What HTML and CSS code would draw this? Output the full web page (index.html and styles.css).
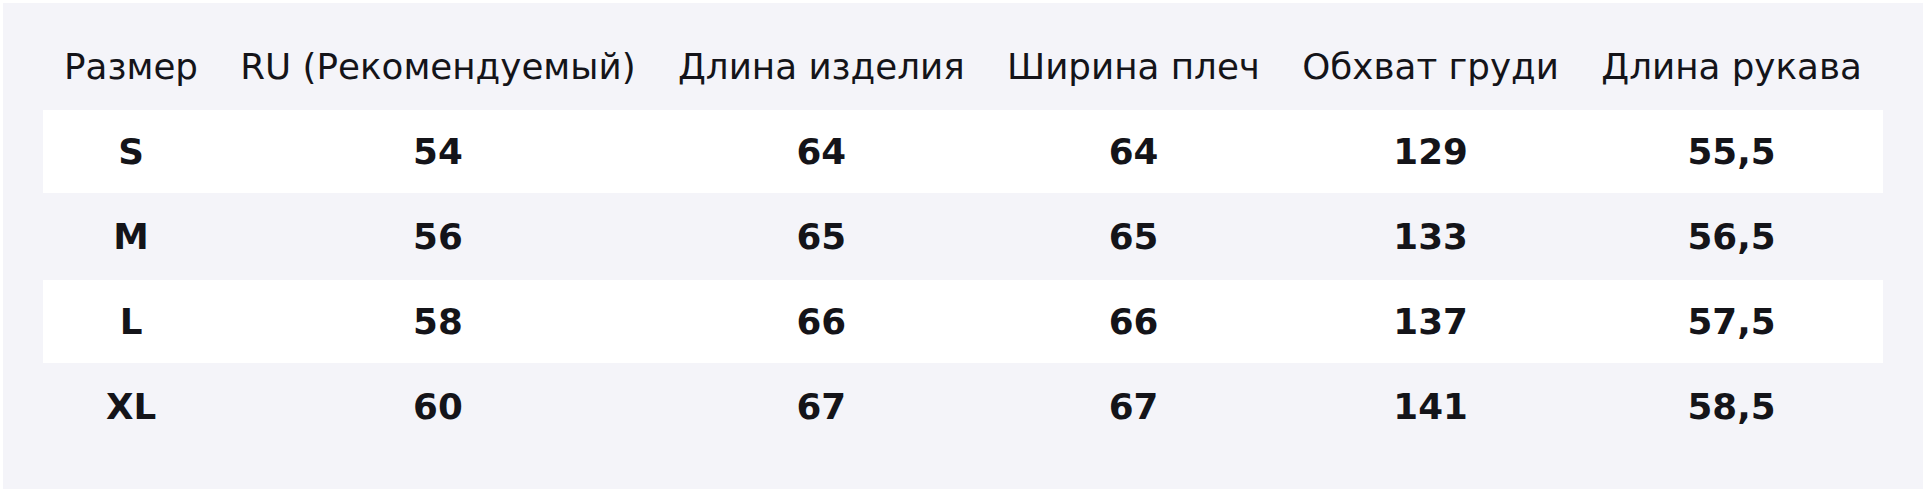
FILE: index.html
```html
<!DOCTYPE html>
<html lang="ru">
<head>
<meta charset="utf-8">
<title>Таблица размеров</title>
<link rel="stylesheet" href="styles.css">
</head>
<body>
<div class="panel">
  <table class="sizes">
    <thead>
      <tr>
        <th>Размер</th>
        <th>RU (Рекомендуемый)</th>
        <th>Длина изделия</th>
        <th>Ширина плеч</th>
        <th>Обхват груди</th>
        <th>Длина рукава</th>
      </tr>
    </thead>
    <tbody>
      <tr class="light"><td>S</td><td>54</td><td>64</td><td>64</td><td>129</td><td>55,5</td></tr>
      <tr><td>M</td><td>56</td><td>65</td><td>65</td><td>133</td><td>56,5</td></tr>
      <tr class="light"><td>L</td><td>58</td><td>66</td><td>66</td><td>137</td><td>57,5</td></tr>
      <tr><td>XL</td><td>60</td><td>67</td><td>67</td><td>141</td><td>58,5</td></tr>
    </tbody>
  </table>
</div>
</body>
</html>
```
FILE: styles.css
```css
html, body {
  margin: 0;
  padding: 0;
  background: #ffffff;
}
body {
  padding: 3px;
  font-family: "DejaVu Sans", "Liberation Sans", sans-serif;
  color: #141419;
}
.panel {
  width: 1920px;
  box-sizing: border-box;
  background: #f4f4f9;
  padding: 20px 40px 39px;
}
.sizes {
  width: 100%;
  border-collapse: separate;
  border-spacing: 0 2px;
  font-size: 35.7px;
}
.sizes th,
.sizes td {
  height: 83px;
  padding: 0 21px;
  text-align: center;
  vertical-align: middle;
  white-space: nowrap;
  box-sizing: border-box;
}
.sizes th {
  font-weight: normal;
}
.sizes td {
  font-weight: bold;
}
.sizes tr.light td {
  background: #ffffff;
}
```
